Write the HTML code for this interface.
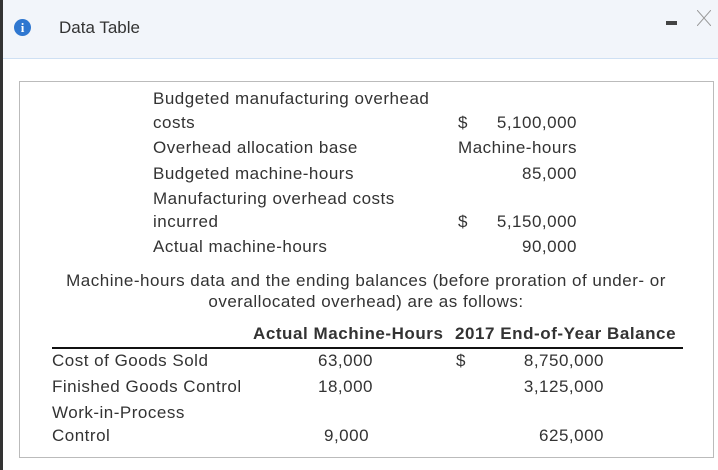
<!DOCTYPE html>
<html><head><style>
body{margin:0;width:718px;height:470px;overflow:hidden;background:#fff;font-family:"Liberation Sans",Arial,sans-serif;color:#333;position:relative}
.a{position:absolute;font-size:17px;letter-spacing:0.5px;line-height:20px;white-space:nowrap}
.r{text-align:right}
.b{font-weight:bold;letter-spacing:0.55px}
</style></head><body>
<div style="position:absolute;left:0;top:0;width:3px;height:470px;background:#333"></div>
<div style="position:absolute;left:3px;top:0;width:715px;height:58px;background:#f2f5fa;border-bottom:1px solid #cfe0f3"></div>
<div style="position:absolute;left:14px;top:19px;width:17px;height:17px;border-radius:50%;background:#2f77d0;color:#fff;font:bold 13px/17px 'Liberation Serif',serif;text-align:center">i</div>
<div class="a" style="left:59px;top:18px;font-size:17px;letter-spacing:0">Data Table</div>
<div style="position:absolute;left:666px;top:21px;width:11px;height:4px;background:#444"></div>
<svg style="position:absolute;left:697px;top:10px" width="14" height="16"><path d="M0 0L14 16M14 0L0 16" stroke="#999" stroke-width="1"/></svg>
<div style="position:absolute;left:19px;top:81px;width:693px;height:375px;border:1px solid #bbb"></div>

<div class="a" style="left:153px;top:89px">Budgeted manufacturing overhead</div>
<div class="a" style="left:153px;top:113px">costs</div>
<div class="a" style="left:458px;top:113px">$</div>
<div class="a r" style="right:141px;top:113px">5,100,000</div>
<div class="a" style="left:153px;top:138px">Overhead allocation base</div>
<div class="a r" style="right:141px;top:138px">Machine-hours</div>
<div class="a" style="left:153px;top:164px">Budgeted machine-hours</div>
<div class="a r" style="right:141px;top:164px">85,000</div>
<div class="a" style="left:153px;top:189px">Manufacturing overhead costs</div>
<div class="a" style="left:153px;top:212px">incurred</div>
<div class="a" style="left:458px;top:212px">$</div>
<div class="a r" style="right:141px;top:212px">5,150,000</div>
<div class="a" style="left:153px;top:237px">Actual machine-hours</div>
<div class="a r" style="right:141px;top:237px">90,000</div>

<div class="a" style="left:0;width:732px;text-align:center;top:271px">Machine-hours data and the ending balances (before proration of under- or</div>
<div class="a" style="left:0;width:732px;text-align:center;top:292px">overallocated overhead) are as follows:</div>

<div class="a b" style="left:253px;top:324px">Actual Machine-Hours</div>
<div class="a b" style="left:455px;top:324px">2017 End-of-Year Balance</div>
<div style="position:absolute;left:52px;top:347px;width:631px;height:2px;background:#111"></div>

<div class="a" style="left:52px;top:351px">Cost of Goods Sold</div>
<div class="a" style="left:318px;top:351px">63,000</div>
<div class="a" style="left:456px;top:351px">$</div>
<div class="a r" style="right:114px;top:351px">8,750,000</div>
<div class="a" style="left:52px;top:377px">Finished Goods Control</div>
<div class="a" style="left:318px;top:377px">18,000</div>
<div class="a r" style="right:114px;top:377px">3,125,000</div>
<div class="a" style="left:52px;top:403px">Work-in-Process</div>
<div class="a" style="left:52px;top:426px">Control</div>
<div class="a" style="left:324px;top:426px">9,000</div>
<div class="a r" style="right:114px;top:426px">625,000</div>
</body></html>
